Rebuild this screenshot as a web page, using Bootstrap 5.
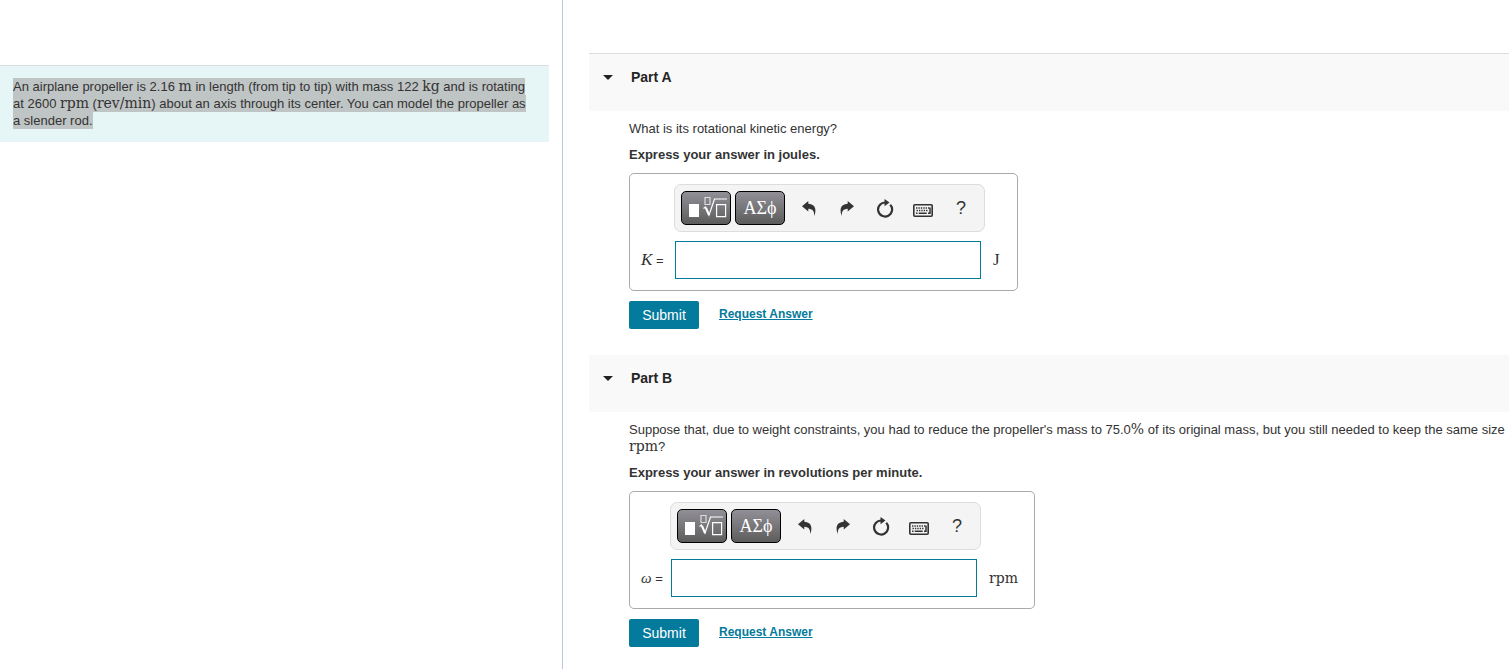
<!DOCTYPE html>
<html lang="en">
<head>
<meta charset="utf-8">
<meta name="viewport" content="width=device-width, initial-scale=1">
<title>Propeller energy</title>
<link href="https://cdn.jsdelivr.net/npm/bootstrap@5.3.0/dist/css/bootstrap.min.css" rel="stylesheet">
<style>
body { font-family: "Liberation Sans", Arial, sans-serif; font-size: 13px; line-height: 17px; color: #333; background: #fff; }
.problem-pane { flex: 0 0 563px; border-right: 1px solid #b8c9e0; padding: 65px 13px 0 0; }
.problem-text { background: #e6f6f6; border-top: 1px solid #dadfe0; padding: 12px 20px 13px 13px; }
.picked { background: #bfc4c4; padding: 1px 0; }
.tex { font-family: "DejaVu Serif", serif; font-size: 14px; line-height: 16px; }
.sym { font-family: "Liberation Serif", "Times New Roman", serif; font-size: 17px; line-height: 16px; }
.sym-small { font-family: "Liberation Serif", "Times New Roman", serif; font-size: 15px; line-height: 16px; }
.work-pane { padding: 53px 0 20px 26px; min-width: 0; }
.part { margin-bottom: 26px; }
.part-head { background: #f9f9f9; height: 57px; padding: 15px 14px; }
.part:first-child .part-head { border-top: 1px solid #ddd; height: 58px; }
.part-toggle { background: none; border: 0; padding: 0; font-size: 14px; font-weight: 700; color: #252525; gap: 18px; line-height: 17px; }
.part-body { padding: 9px 0 0 40px; }
.ask { margin-bottom: 9px; }
.ask.fw-bold { margin-bottom: 10px; }
.answer-box { display: grid; width: fit-content; grid-template-columns: 25px auto auto; column-gap: 8px; row-gap: 9px; align-items: center; border: 1px solid #aaa; border-radius: 5px; padding: 10px 16px 11px 11px; }
.answer-box.narrow-label { grid-template-columns: 21px auto auto; }
.answer-box label { white-space: nowrap; }
.tools { grid-column: 2 / 4; justify-self: start; background: #f4f4f4; border: 1px solid #ddd; border-radius: 7px; height: 48px; padding: 0 4px 0 6px; }
.key { width: 50px; height: 34px; padding: 0; border: 1px solid #000; border-radius: 5px; background: linear-gradient(#929097, #5c5c5c); color: #fff; }
.key + .key { margin: 0 5px 0 4px; }
.greek { font-family: "Liberation Serif", "Times New Roman", serif; font-size: 18px; line-height: 30px; }
.tool { width: 38px; height: 34px; padding: 0; border: 0; background: none; color: #333; font-size: 18px; }
.tool svg { display: block; margin: auto; }
.key svg { display: block; margin-left: 7px; }
.tool-board { padding-top: 5px; }
.answer-input { width: 306px; height: 38px; margin-left: 1px; border: 1px solid #047a9c; border-radius: 0; padding: 6px; }
.unit { padding-left: 4px; min-width: 12px; }
.actions { margin-top: 10px; }
.submit { background: #047a9c; color: #fff; width: 70px; height: 28px; border: 0; border-radius: 2px; padding: 0; font-size: 14px; }
.submit:hover { background: #036078; color: #fff; }
.request { font-size: 12px; font-weight: 700; color: #047a9c; padding-bottom: 2px; }
</style>
</head>
<body>
<svg class="d-none" aria-hidden="true">
  <symbol id="i-undo" viewBox="0 0 14 15"><path fill="currentColor" d="M0 5.2 6.3 0v2.8C11 3 13.6 6 13.4 9.500c0 2-.5 4-1.200 5.500C12.300 11 11.500 8 6.300 7.800v2.700z"/></symbol>
  <symbol id="i-reload" viewBox="0 0 18 20"><path fill="none" stroke="currentColor" stroke-width="2.200" d="M9.500 4.500A7 7 0 1 0 14.200 6.700"/><path fill="currentColor" d="M8.500 1 13.500 4.400 8.500 8.200z"/></symbol>
  <symbol id="i-board" viewBox="0 0 20 13"><rect x=".8" y=".8" width="18.400" height="11.400" rx="1" fill="none" stroke="currentColor" stroke-width="1.600"/><path fill="none" stroke="currentColor" stroke-width="1.300" stroke-dasharray="1.400 1" d="M3 4h13.500M3.500 6.500h12"/><path fill="none" stroke="currentColor" stroke-width="1.500" d="M3 9.200h1.500M5.700 9.200h8M15 9.200h2V3.500"/></symbol>
  <symbol id="i-root" viewBox="0 0 38 24"><path fill="#fff" d="M0 8h10v13H0z"/><path fill="none" stroke="#ddd" stroke-width="1.200" d="M16 1.500h5v7h-5z"/><path fill="none" stroke="#fff" stroke-width="1.200" d="M14.500 12.500 16.500 11l3.500 8 5.500-16H38M27.600 8.600h9v12h-9z"/><path stroke="#fff" stroke-width="2" d="m17 12 3 7"/></symbol>
</svg>
<div class="d-flex min-vh-100">
  <aside class="problem-pane">
    <div class="problem-text"><span class="picked">An airplane propeller is 2.16 <span class="tex">m</span> in length (from tip to tip) with mass 122 <span class="tex">kg</span> and is rotating at 2600 <span class="tex">rpm</span> (<span class="tex">rev/min</span>) about an axis through its center. You can model the propeller as a slender rod.</span></div>
  </aside>
  <main class="work-pane flex-grow-1">
    <section class="part">
      <div class="part-head"><button class="part-toggle d-flex align-items-center" type="button"><svg width="10" height="5" viewBox="0 0 10 5"><path fill="#222" d="M0 0h10L5 5z"/></svg>Part A</button></div>
      <div class="part-body">
        <p class="ask">What is its rotational kinetic energy?</p>
        <p class="ask fw-bold">Express your answer in joules.</p>
        <div class="answer-box">
          <div class="tools d-flex align-items-center">
            <button class="key" type="button" aria-label="Templates"><svg width="38" height="24"><use href="#i-root"/></svg></button>
            <button class="key greek" type="button">ΑΣϕ</button>
            <button class="tool" type="button" aria-label="Undo"><svg width="14" height="15"><use href="#i-undo"/></svg></button>
            <button class="tool" type="button" aria-label="Redo"><svg width="14" height="15"><use href="#i-undo" transform="matrix(-1 0 0 1 14 0)"/></svg></button>
            <button class="tool" type="button" aria-label="Reset"><svg width="18" height="20"><use href="#i-reload"/></svg></button>
            <button class="tool tool-board" type="button" aria-label="Keyboard"><svg width="20" height="13"><use href="#i-board"/></svg></button>
            <button class="tool" type="button">?</button>
          </div>
          <label for="ans-a"><i class="sym">K</i> =</label>
          <input id="ans-a" class="answer-input" type="text">
          <span class="unit sym">J</span>
        </div>
        <div class="actions d-flex align-items-center"><button class="submit btn" type="submit">Submit</button><a class="request ms-3 ps-1" href="#">Request Answer</a></div>
      </div>
    </section>
    <section class="part">
      <div class="part-head"><button class="part-toggle d-flex align-items-center" type="button"><svg width="10" height="5" viewBox="0 0 10 5"><path fill="#222" d="M0 0h10L5 5z"/></svg>Part B</button></div>
      <div class="part-body">
        <p class="ask">Suppose that, due to weight constraints, you had to reduce the propeller's mass to 75.0<span class="tex">%</span> of its original mass, but you still needed to keep the same size <span class="tex">rpm</span>?</p>
        <p class="ask fw-bold">Express your answer in revolutions per minute.</p>
        <div class="answer-box narrow-label">
          <div class="tools d-flex align-items-center">
            <button class="key" type="button" aria-label="Templates"><svg width="38" height="24"><use href="#i-root"/></svg></button>
            <button class="key greek" type="button">ΑΣϕ</button>
            <button class="tool" type="button" aria-label="Undo"><svg width="14" height="15"><use href="#i-undo"/></svg></button>
            <button class="tool" type="button" aria-label="Redo"><svg width="14" height="15"><use href="#i-undo" transform="matrix(-1 0 0 1 14 0)"/></svg></button>
            <button class="tool" type="button" aria-label="Reset"><svg width="18" height="20"><use href="#i-reload"/></svg></button>
            <button class="tool tool-board" type="button" aria-label="Keyboard"><svg width="20" height="13"><use href="#i-board"/></svg></button>
            <button class="tool" type="button">?</button>
          </div>
          <label for="ans-b"><i class="sym-small">ω</i> =</label>
          <input id="ans-b" class="answer-input" type="text">
          <span class="unit tex">rpm</span>
        </div>
        <div class="actions d-flex align-items-center"><button class="submit btn" type="submit">Submit</button><a class="request ms-3 ps-1" href="#">Request Answer</a></div>
      </div>
    </section>
  </main>
</div>
<script src="https://cdn.jsdelivr.net/npm/bootstrap@5.3.0/dist/js/bootstrap.bundle.min.js"></script>
</body>
</html>
